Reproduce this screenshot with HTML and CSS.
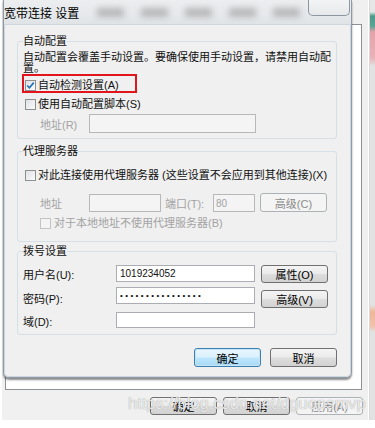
FILE: index.html
```html
<!DOCTYPE html>
<html lang="zh-CN">
<head>
  <meta charset="UTF-8" />
  <meta name="viewport" content="width=device-width, initial-scale=1.0" />
  <title>宽带连接 设置</title>
  <link rel="stylesheet" href="styles.css">
</head>
<body>
  <div class="desktop">
    <div class="back-window">
      <div class="back-tabs"></div>
      <div class="back-panel"></div>
      <div class="back-buttons">
        <button class="btn">确定</button>
        <button class="btn">取消</button>
        <button class="btn" disabled>应用(A)</button>
      </div>
      <div class="watermark">https://blog.csdn.net/dguopsmvp</div>
    </div>
    <div class="edge-strip"></div>

    <div class="dialog">
      <div class="titlebar">
        <span class="title">宽带连接 设置</span>
        <span class="ghost-tabs"><i></i><i></i><i></i><i></i><i></i></span>
        <span class="close-btn"></span>
      </div>

      <div class="dialog-body">
        <fieldset class="group group-auto">
          <legend>自动配置</legend>
          <p class="desc">自动配置会覆盖手动设置。要确保使用手动设置，请禁用自动配置。</p>
          <label class="check-row highlight">
            <span class="box">
              <svg viewBox="0 0 11 11" width="9" height="9"><polyline points="1.5,5.5 4.2,8.2 9.5,2" fill="none" stroke="#1d73b8" stroke-width="2"/></svg>
            </span>自动检测设置(A)
          </label>
          <label class="check-row script-row"><span class="box"></span>使用自动配置脚本(S)</label>
          <div class="field-row addr-row">
            <span class="field-label muted">地址(R)</span>
            <input class="text-input script-addr" disabled>
          </div>
        </fieldset>

        <fieldset class="group group-proxy">
          <legend>代理服务器</legend>
          <label class="check-row proxy-row"><span class="box"></span>对此连接使用代理服务器 (这些设置不会应用到其他连接)(X)</label>
          <div class="field-row proxy-addr">
            <span class="field-label muted">地址</span>
            <input class="text-input proxy-host" disabled>
            <span class="port-label muted">端口(T):</span>
            <input class="text-input proxy-port" value="80" disabled>
            <button class="btn" disabled>高级(C)</button>
          </div>
          <label class="check-row bypass-row muted"><span class="box off"></span>对于本地地址不使用代理服务器(B)</label>
        </fieldset>

        <fieldset class="group group-dial">
          <legend>拨号设置</legend>
          <div class="dial-grid">
            <span class="dial-label">用户名(U):</span>
            <input class="text-input live" value="1019234052">
            <button class="btn">属性(O)</button>

            <span class="dial-label">密码(P):</span>
            <input class="text-input live pass" type="password" value="1234567890123456">
            <button class="btn btn-low">高级(V)</button>

            <span class="dial-label">域(D):</span>
            <input class="text-input live domain">
          </div>
        </fieldset>

        <div class="dialog-buttons">
          <button class="btn btn-default">确定</button>
          <button class="btn">取消</button>
        </div>
      </div>
    </div>
  </div>
</body>
</html>
```

FILE: styles.css
```css
* {
  box-sizing: border-box;
}

body {
  margin: 0;
  background: #ffffff;
  font-family: "Liberation Sans", "Noto Sans CJK SC", sans-serif;
  font-size: 11px;
  color: #111;
  overflow: hidden;
}

.desktop {
  position: relative;
  display: flex;
  width: 375px;
  height: 428px;
}

/* window that sits behind the dialog */
.back-window {
  position: relative;
  margin-left: 2px;
  width: 366px;
  height: 420px;
  background: #f0f0f0;
  display: flex;
  flex-direction: column;
}

.back-tabs {
  height: 24px;
}

.back-panel {
  margin-left: 3px;
  width: 357px;
  height: 366px;
  background: #fff;
  border: 1px solid #8d9095;
}

.back-buttons {
  display: flex;
  justify-content: flex-end;
  gap: 6px;
  margin-top: 7px;
  padding-right: 5px;
}

.back-buttons .btn {
  height: 18px;
}

.watermark {
  position: absolute;
  left: 126px;
  top: 394px;
  font-family: "Liberation Sans", sans-serif;
  font-size: 16.5px;
  color: rgba(255, 255, 255, 0.8);
  text-shadow: 0 0 1px #8a8a8a;
  white-space: nowrap;
  pointer-events: none;
}

.edge-strip {
  margin-left: 1px;
  width: 6px;
  height: 420px;
  border-left: 1px solid #d8d8d8;
  background: linear-gradient(
    to bottom,
    #e6e6e6 0,
    #e6e6e6 12px,
    #4e9a8a 16px,
    #5aa294 26px,
    #e4a3aa 32px,
    #e9b3b8 58px,
    #e2e2e2 66px,
    #e2e2e2 305px,
    #efb699 312px,
    #f1c2a8 326px,
    #e2e2e2 332px
  );
}

/* dialog */
.dialog {
  position: absolute;
  left: 3px;
  top: 0;
  width: 349px;
  height: 378px;
  display: flex;
  flex-direction: column;
  background: #e4e8ec;
  border: 1px solid #8e9aa6;
  border-top: none;
  border-radius: 0 0 6px 6px;
  box-shadow: 0 2px 2px rgba(0, 0, 0, 0.45);
}

.titlebar {
  height: 24px;
  display: flex;
  align-items: center;
  background: linear-gradient(to bottom, #eceef0, #e1e4e7);
}

.title {
  font-size: 12px;
  color: #000;
  white-space: nowrap;
}

.ghost-tabs {
  display: flex;
  margin-left: 18px;
  gap: 17px;
}

.ghost-tabs i {
  display: block;
  width: 27px;
  height: 9px;
  background: rgba(95, 95, 95, 0.35);
  filter: blur(3px);
}

.close-btn {
  align-self: flex-start;
  margin-left: auto;
  margin-right: 1px;
  width: 42px;
  height: 16px;
  border: 1px solid #8c97a2;
  border-top: none;
  border-radius: 0 0 5px 5px;
  background: linear-gradient(to bottom, #f3f4f5, #e6e8ea);
}

.dialog-body {
  flex: 1;
  background: #f0f0f0;
  border: 1px solid #cdd5dd;
  border-radius: 0 0 4px 4px;
  padding: 10px 13px 0 12px;
}

.group {
  margin: 0;
  padding: 0 5px;
  min-width: 0;
  border: 1px solid #d5dfe5;
  border-radius: 3px;
}

.group legend {
  padding: 0;
  line-height: 13px;
  font-size: 11px;
}

.desc {
  margin: 0;
  padding-top: 4px;
  width: 310px;
  line-height: 11px;
}

.check-row {
  display: flex;
  align-items: center;
  line-height: 14px;
  padding-left: 2px;
  white-space: nowrap;
}

.box {
  flex: none;
  display: flex;
  align-items: center;
  justify-content: center;
  width: 11px;
  height: 11px;
  margin-right: 2px;
  border: 1px solid #8e8f8f;
  background: linear-gradient(135deg, #dfe1e4, #fbfbfb);
}

.box.off {
  border-color: #c4c4c4;
  background: #f4f4f4;
  margin-right: 3px;
}

.highlight {
  display: inline-flex;
  margin-left: -1px;
  height: 19px;
  padding: 3px 16px 0 1px;
  line-height: 12px;
  border: 2px solid #e3151c;
}

.script-row {
  margin-top: 4px;
}

.muted {
  color: #a3a3a3;
}

.field-row {
  display: flex;
  align-items: center;
}

.field-label {
  width: 66px;
  padding-left: 17px;
}

.addr-row {
  margin-top: 3px;
}

.group-auto {
  padding-bottom: 5px;
}

.text-input {
  height: 19px;
  padding: 0 2px;
  border: 1px solid #b8b8b8;
  border-radius: 0;
  background: #f4f4f4;
  font-family: "Liberation Sans", sans-serif;
  font-size: 10px;
  color: #a3a3a3;
  outline: none;
}

.script-addr {
  width: 167px;
}

.group-proxy {
  margin-top: 6px;
  padding-bottom: 11px;
}

.proxy-row {
  margin-top: 10px;
}

.proxy-addr {
  margin-top: 12px;
}

.proxy-host {
  width: 72px;
  height: 18px;
}

.port-label {
  width: 52px;
  padding-left: 4px;
}

.proxy-port {
  width: 42px;
  height: 18px;
}

.proxy-addr .btn {
  margin-left: 5px;
  margin-top: -1px;
}

.bypass-row {
  margin-top: 4px;
  padding-left: 17px;
}

.group-dial {
  margin-top: 3px;
  padding-top: 7px;
  padding-bottom: 5px;
}

.dial-grid {
  display: grid;
  grid-template-columns: 87px 139px 67px;
  grid-template-rows: 18px 21px 17px;
  column-gap: 6px;
  row-gap: 4px;
  align-items: start;
}

.dial-label {
  align-self: center;
  white-space: nowrap;
}

.text-input.live {
  height: 17px;
  background: #fff;
  border-color: #abadb3;
  color: #111;
  padding-left: 3px;
}

.text-input.pass {
  font-size: 8px;
  letter-spacing: 2.4px;
}

.text-input.domain {
  height: 16px;
}

.btn {
  width: 67px;
  height: 19px;
  padding: 0;
  border: 1px solid #707070;
  border-radius: 3px;
  background: linear-gradient(to bottom, #f4f4f4 0, #ebebeb 48%, #dddddd 52%, #d2d2d2 100%);
  font-family: "Liberation Sans", "Noto Sans CJK SC", sans-serif;
  font-size: 11px;
  color: #000;
}

.btn:disabled {
  border-color: #adb2b5;
  background: #f4f4f4;
  color: #8a8a8a;
}

.dial-grid .btn {
  height: 18px;
}

.btn-low {
  align-self: end;
}

.btn-default {
  border-color: #3c7fb1;
  background: linear-gradient(to bottom, #eaf6fd 0, #d9f0fc 48%, #bee6fd 52%, #a7d9f5 100%);
  box-shadow: inset 0 0 0 1px #c5e5f7;
}

.dialog-buttons {
  display: flex;
  justify-content: flex-end;
  gap: 9px;
  margin-top: 13px;
}
```
